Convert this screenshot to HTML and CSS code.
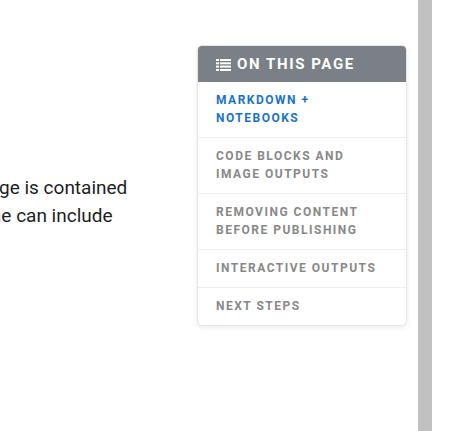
FILE: index.html
```html
<!doctype html>
<html lang="en">
    <head>
        <title>Notebooks</title>
        <meta http-equiv='Content-Type' content='text/html; charset=utf-8'>
        <meta name="viewport" content="width=device-width, initial-scale=1">
        <link rel="stylesheet" href="styles.css">
    </head>
    <body>
        <div class="page">
            <main class="content">
                <p>ge is contained<br><span class="link">a</span>e can include</p>
            </main>
            <aside class="toc">
                <div class="toc-title">
                    <svg class="toc-icon" viewBox="0 0 15 12" width="15" height="12">
                        <rect x="0" y="0" width="3" height="2" />
                        <rect x="0" y="3.3" width="3" height="2" />
                        <rect x="0" y="6.6" width="3" height="2" />
                        <rect x="0" y="10" width="3" height="2" />
                        <rect x="4" y="0" width="11" height="2" />
                        <rect x="4" y="3.3" width="11" height="2" />
                        <rect x="4" y="6.6" width="11" height="2" />
                        <rect x="4" y="10" width="11" height="2" />
                    </svg>
                    On this page
                </div>
                <ul class="toc-list">
                    <li><a class="active" href="#markdown">Markdown + notebooks</a></li>
                    <li><a href="#code">Code blocks and image outputs</a></li>
                    <li><a href="#removing">Removing content before publishing</a></li>
                    <li><a href="#interactive">Interactive outputs</a></li>
                    <li><a href="#next">Next steps</a></li>
                </ul>
            </aside>
            <div class="scrollbar"></div>
        </div>
    </body>
</html>
```

FILE: styles.css
```css
body {
    margin: 0;
    font-family: Roboto, sans-serif;
    background: #fff;
}
.page {
    display: flex;
    height: 431px;
    overflow: hidden;
}
.content {
    width: 197px;
    flex-shrink: 0;
    overflow: hidden;
}
.content p {
    margin: 174px 0 0 -1px;
    font-size: 19px;
    line-height: 28px;
    color: #1d1d1d;
    white-space: nowrap;
}
.link {
    color: #7a2a12;
    margin-left: -8px;
}
.toc {
    width: 210px;
    flex-shrink: 0;
    align-self: flex-start;
    margin-top: 45px;
    border: 1px solid #e6e6e6;
    border-radius: 5px;
    box-shadow: 0 2px 4px rgba(0, 0, 0, 0.08);
    overflow: hidden;
    box-sizing: border-box;
}
.toc-title {
    background: #7a8086;
    color: #fff;
    font-weight: 700;
    font-size: 15px;
    letter-spacing: 1.6px;
    text-transform: uppercase;
    padding: 9px 18px 8px;
    line-height: 19px;
    display: flex;
    align-items: center;
    gap: 6px;
}
.toc-icon {
    fill: #fff;
}
.toc-list {
    list-style: none;
    margin: 0;
    padding: 0;
}
.toc-list li {
    border-top: 1px solid #eee;
}
.toc-list li:first-child {
    border-top: none;
}
.toc-list a {
    display: block;
    padding: 9px 18px 10px;
    font-size: 12px;
    font-weight: 700;
    line-height: 18px;
    letter-spacing: 1.5px;
    text-transform: uppercase;
    text-decoration: none;
    color: #888;
}
.toc-list a.active {
    color: #1a73c9;
}
.scrollbar {
    width: 14px;
    margin-left: 11px;
    background: #c1c1c1;
    flex-shrink: 0;
}
```
